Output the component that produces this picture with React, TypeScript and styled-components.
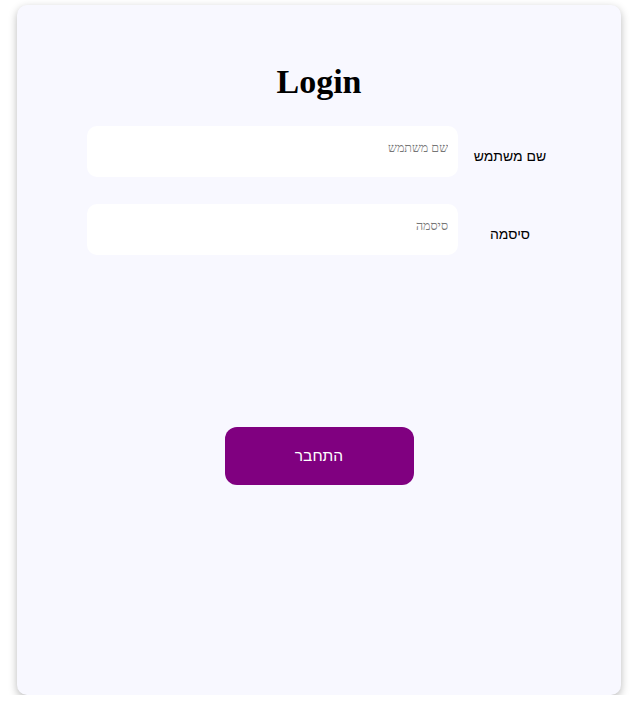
import React from "react"
import styled, { createGlobalStyle } from "styled-components"

const GlobalStyle = createGlobalStyle`
    html, body {
        margin: 0;
        padding: 0;
        background: #fff;
        font-family: "Liberation Serif", "Times New Roman", serif;
    }
`

export default function App() {
    return (
        <>
            <GlobalStyle />
            <SCard>
                <STitle>Login</STitle>
                <SForm>
                    <SRow>
                        <SInput type="text" placeholder="שם משתמש" />
                        <SLabel>שם משתמש</SLabel>
                    </SRow>
                    <SRow>
                        <SInput type="password" placeholder="סיסמה" />
                        <SLabel>סיסמה</SLabel>
                    </SRow>
                </SForm>
                <SButton type="button">התחבר</SButton>
            </SCard>
        </>
    )
}

const SCard = styled.div`
    box-sizing: border-box;
    width: 604px;
    height: 690px;
    margin: 5px 0 0 17px;
    background: #f8f8ff;
    border-radius: 10px;
    box-shadow: 0 3px 8px rgba(0, 0, 0, 0.28);
    display: flex;
    flex-direction: column;
    align-items: center;
    padding-top: 57px;
`

const STitle = styled.h1`
    margin: 0;
    font-size: 34px;
    line-height: 40px;
    font-weight: bold;
    color: #000;
`

const SForm = styled.div`
    display: flex;
    flex-direction: column;
    gap: 27px;
    width: 100%;
    margin-top: 24px;
`

const SRow = styled.div`
    display: flex;
    align-items: center;
    padding-left: 70px;
`

const SInput = styled.input`
    box-sizing: border-box;
    width: 371px;
    height: 51px;
    border: none;
    outline: none;
    border-radius: 10px;
    background: #fff;
    direction: rtl;
    padding: 0 10px 6px 10px;
    font-family: "Liberation Serif", serif;
    font-size: 12.5px;
    &::placeholder {
        color: #757575;
    }
`

const SLabel = styled.label`
    width: 104px;
    text-align: center;
    direction: rtl;
    font-family: "Liberation Sans", Arial, sans-serif;
    font-size: 14px;
    color: #000;
    padding-top: 8px;
`

const SButton = styled.button`
    margin-top: 172px;
    width: 189px;
    height: 58px;
    border: none;
    border-radius: 12px;
    background: #800080;
    color: #fff;
    font-family: "Liberation Sans", Arial, sans-serif;
    font-size: 15.5px;
    cursor: pointer;
`
